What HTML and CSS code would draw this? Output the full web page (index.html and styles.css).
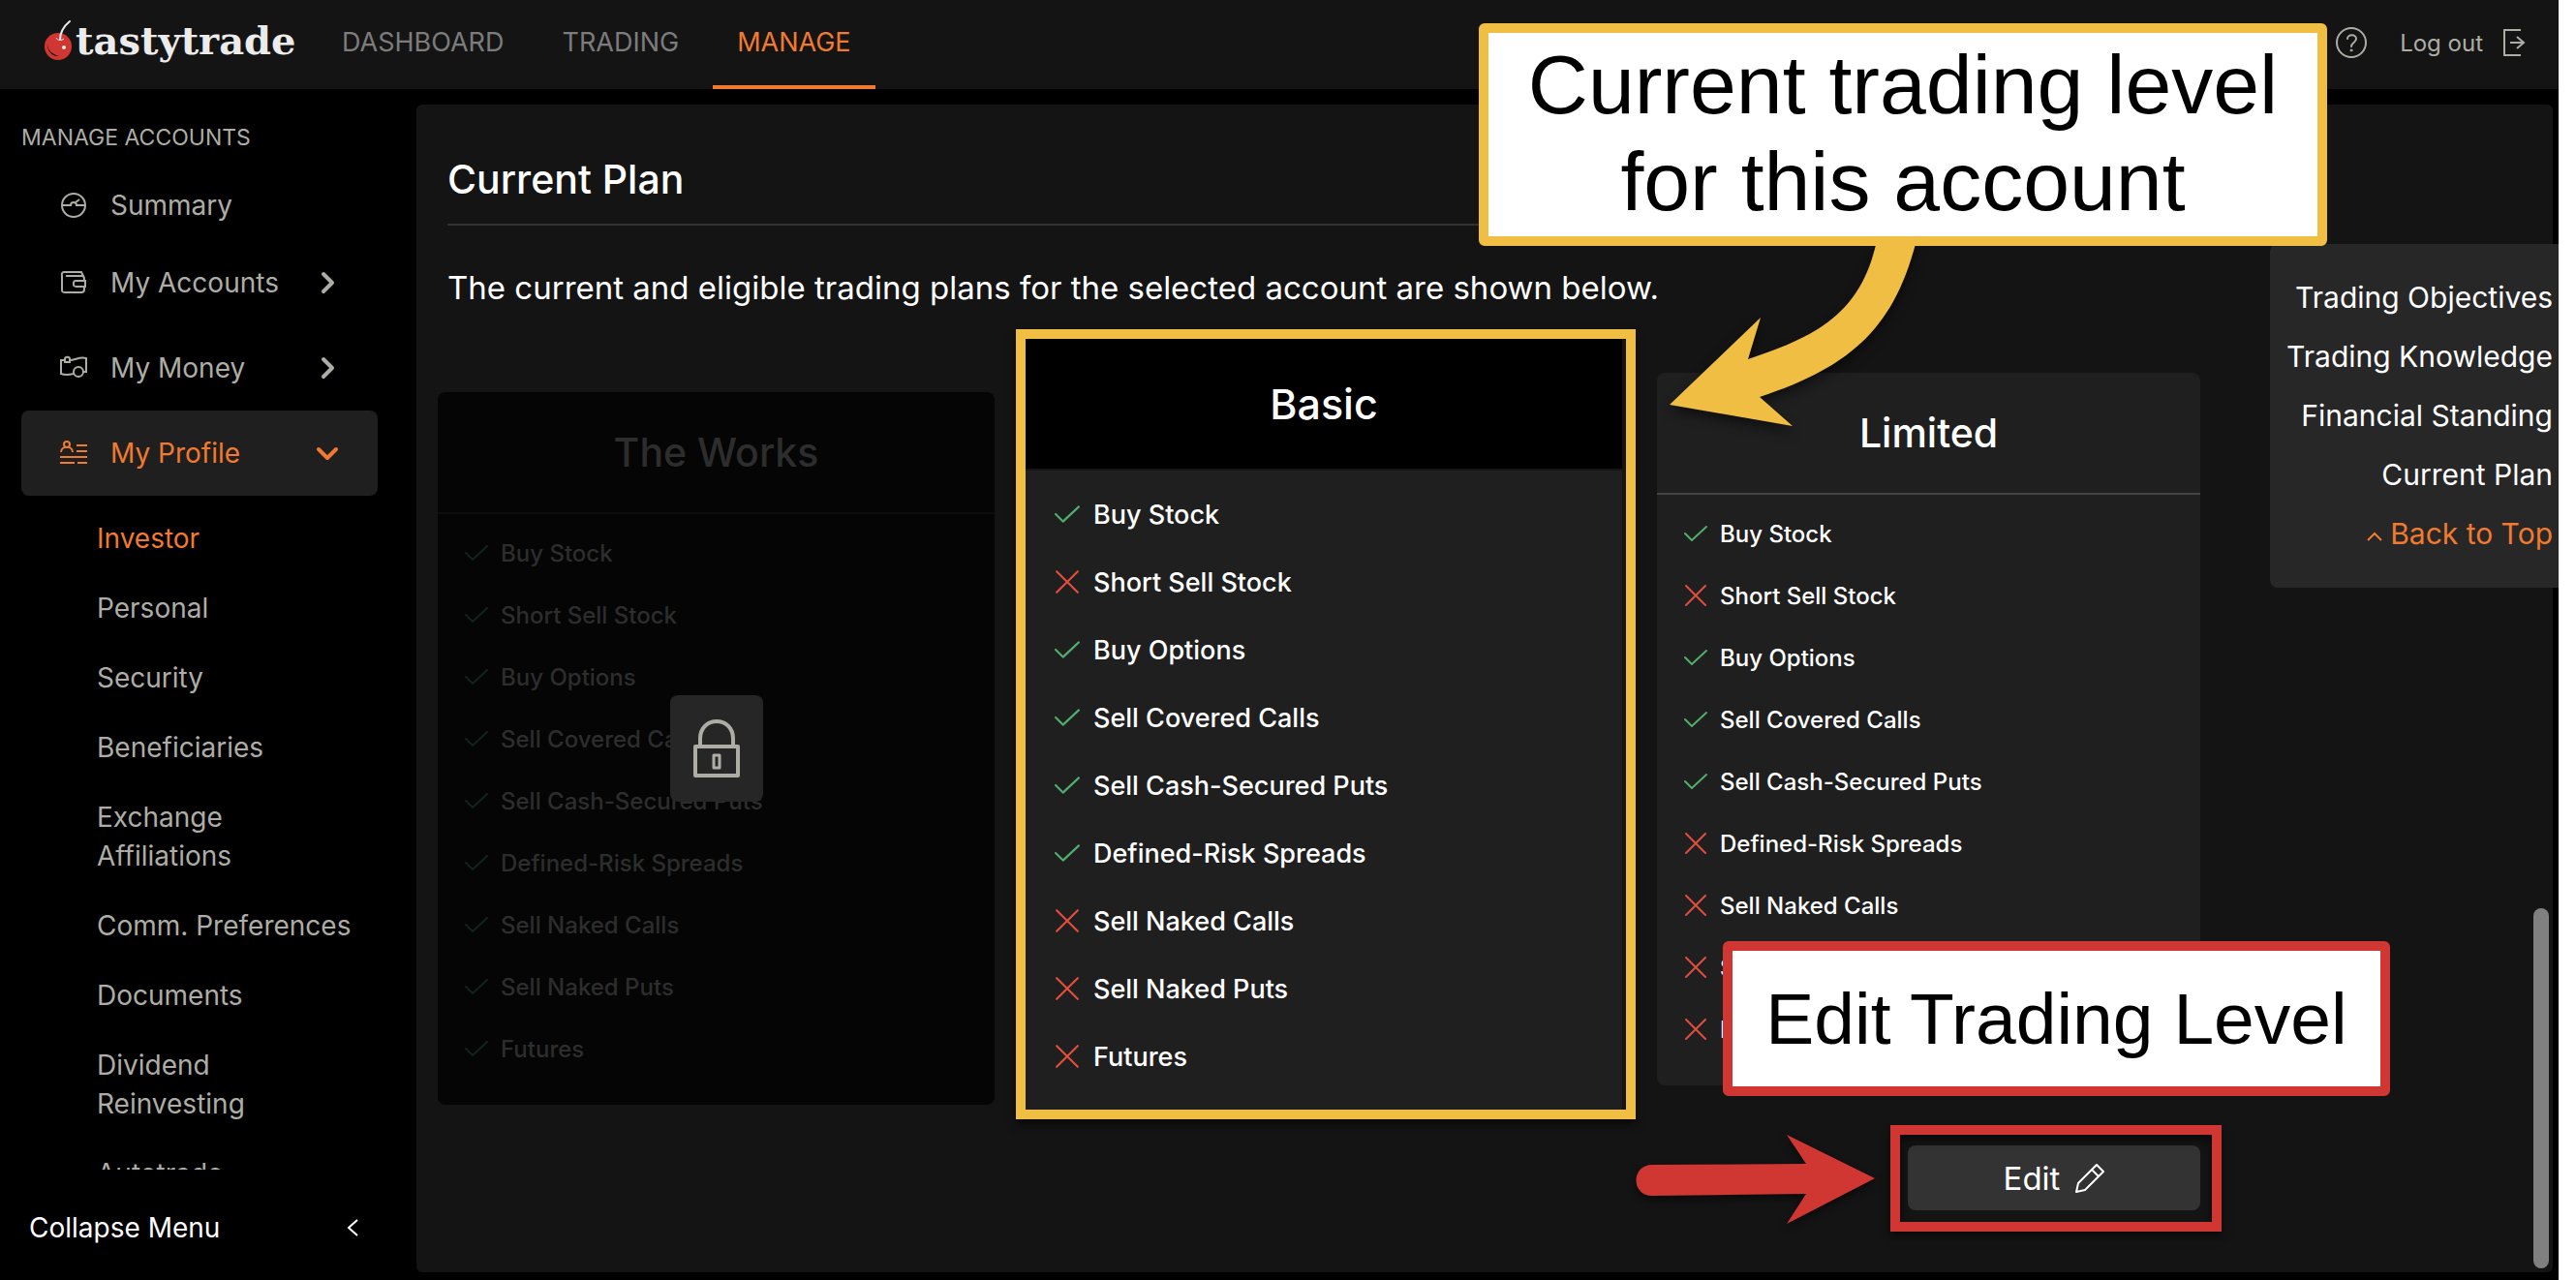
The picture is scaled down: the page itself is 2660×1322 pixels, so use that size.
FILE: index.html
```
<!DOCTYPE html>
<html lang="en">
<head>
  <meta charset="UTF-8" />
  <meta name="viewport" content="width=device-width, initial-scale=1.0"/>
  <title>tastytrade - Current Plan</title>
  <link rel="stylesheet" href="styles.css">
</head>
<body>
  <!-- shared icons -->
  <svg class="sprite" width="0" height="0" aria-hidden="true">
    <symbol id="check" viewBox="0 0 24 24"><path d="M1 12l7 7L23 5" fill="none" stroke="currentColor" stroke-width="2" stroke-linecap="round" stroke-linejoin="round"/></symbol>
    <symbol id="cross" viewBox="0 0 24 24"><path d="M2 2l20 20M22 2L2 22" fill="none" stroke="currentColor" stroke-width="2" stroke-linecap="round"/></symbol>
    <symbol id="chevron" viewBox="0 0 24 24"><path d="M8 3l9 9-9 9" fill="none" stroke="currentColor" stroke-width="4" stroke-linecap="round" stroke-linejoin="round"/></symbol>
  </svg>

  <div class="app">
    <header class="topbar">
      <a href="#" class="logo">
        <svg class="cherry" viewBox="0 0 30 42" aria-hidden="true">
          <circle cx="14" cy="28" r="14" fill="#d03733"/>
          <path d="M26 2C20 7 16 14 16 21" fill="none" stroke="#ebebeb" stroke-width="2" stroke-linecap="round"/>
          <path d="M12 19c1 3 6 3 8 1" fill="none" stroke="#ebebeb" stroke-width="1"/>
          <circle cx="20" cy="29" r="2" fill="#ebebeb"/>
          <path d="M3 25c0 7 5 11 12 13-7 1-13-6-12-13z" fill="#141414"/>
        </svg>
        <span>tastytrade</span>
      </a>
      <nav class="tabs">
        <a href="#">DASHBOARD</a>
        <a href="#">TRADING</a>
        <a href="#" class="active">MANAGE</a>
      </nav>
      <div class="session">
        <a href="#" class="help" aria-label="Help">
          <svg viewBox="0 0 32 32" fill="none" stroke="currentColor" stroke-width="2" stroke-linecap="round">
            <circle cx="16" cy="16" r="15"/>
            <path d="M12 12c0-5 9-5 9 0 0 4-5 4-5 8"/>
            <circle cx="16" cy="24" r="1" fill="currentColor" stroke-width="1"/>
          </svg>
        </a>
        <a href="#" class="logout">Log out
          <svg viewBox="0 0 24 28" fill="none" stroke="currentColor" stroke-width="2">
            <path d="M19 1H2v26h17M8 14h14M15 8l7 6-7 6"/>
          </svg>
        </a>
      </div>
    </header>

    <div class="body">
      <aside class="sidebar">
        <nav class="menu">
          <h2>MANAGE ACCOUNTS</h2>
          <a href="#" class="item short">
            <svg class="icon" viewBox="0 0 28 28"><circle cx="14" cy="14" r="12"/><path d="M2 14h9c0-4 6-4 6 0h9M16 11l4-3"/></svg>
            <span>Summary</span>
          </a>
          <a href="#" class="item">
            <svg class="icon" viewBox="0 0 28 28"><path d="M24 8V7l-2-4H4C1 3 2 6 2 8v13c0 2 0 3 3 3h17c2 0 3-1 3-3v-2M6 7h17c2 0 2 2 2 5M26 12h-9c-3 0-3 1-3 3s0 3 3 3h9z"/></svg>
            <span>My Accounts</span>
            <svg class="arrow"><use href="#chevron"/></svg>
          </a>
          <a href="#" class="item">
            <svg class="icon" viewBox="0 0 28 28"><path d="M5 6H1v14c5 2 9 1 13 0M10 6c6 0 10-4 17-2v14h-3M5 8V5c0-3 5-3 5 0v3H5z"/><circle cx="19" cy="18" r="5"/></svg>
            <span>My Money</span>
            <svg class="arrow"><use href="#chevron"/></svg>
          </a>
          <a href="#" class="item open">
            <svg class="icon" viewBox="0 0 28 28"><circle cx="7" cy="5" r="3"/><path d="M1 13c0-7 12-7 12 0M17 6h11M17 12h11M0 18h28M0 24h15M18 24h10"/></svg>
            <span>My Profile</span>
            <svg class="arrow down"><use href="#chevron"/></svg>
          </a>
          <ul class="submenu">
            <li><a href="#" class="active">Investor</a></li>
            <li><a href="#">Personal</a></li>
            <li><a href="#">Security</a></li>
            <li><a href="#">Beneficiaries</a></li>
            <li><a href="#">Exchange<br>Affiliations</a></li>
            <li><a href="#">Comm. Preferences</a></li>
            <li><a href="#">Documents</a></li>
            <li><a href="#">Dividend<br>Reinvesting</a></li>
            <li><a href="#">Autotrade</a></li>
          </ul>
        </nav>
        <button type="button" class="collapse">
          Collapse Menu
          <svg viewBox="0 0 12 20"><path d="M11 2L2 10l9 8" fill="none" stroke="currentColor" stroke-width="2"/></svg>
        </button>
      </aside>

      <main class="content">
        <section class="plan">
          <h1>Current Plan</h1>
          <p class="intro">The current and eligible trading plans for the selected account are shown below.</p>

          <div class="cards">
            <article class="card locked">
              <h3>The Works</h3>
              <ul>
                <li><svg class="yes"><use href="#check"/></svg>Buy Stock</li>
                <li><svg class="yes"><use href="#check"/></svg>Short Sell Stock</li>
                <li><svg class="yes"><use href="#check"/></svg>Buy Options</li>
                <li><svg class="yes"><use href="#check"/></svg>Sell Covered Calls</li>
                <li><svg class="yes"><use href="#check"/></svg>Sell Cash-Secured Puts</li>
                <li><svg class="yes"><use href="#check"/></svg>Defined-Risk Spreads</li>
                <li><svg class="yes"><use href="#check"/></svg>Sell Naked Calls</li>
                <li><svg class="yes"><use href="#check"/></svg>Sell Naked Puts</li>
                <li><svg class="yes"><use href="#check"/></svg>Futures</li>
              </ul>
              <div class="lock">
                <svg viewBox="0 0 48 60" fill="none" stroke="#adada5" stroke-width="4" stroke-linejoin="round">
                  <path d="M2 28h44v30H2zM7 28V20c0-24 34-24 34 0v8"/>
                  <path d="M21 37h6v13h-6z" stroke-width="3"/>
                </svg>
              </div>
            </article>

            <div class="highlight">
              <article class="card current">
                <h3>Basic</h3>
                <ul>
                  <li><svg class="yes"><use href="#check"/></svg>Buy Stock</li>
                  <li><svg class="no"><use href="#cross"/></svg>Short Sell Stock</li>
                  <li><svg class="yes"><use href="#check"/></svg>Buy Options</li>
                  <li><svg class="yes"><use href="#check"/></svg>Sell Covered Calls</li>
                  <li><svg class="yes"><use href="#check"/></svg>Sell Cash-Secured Puts</li>
                  <li><svg class="yes"><use href="#check"/></svg>Defined-Risk Spreads</li>
                  <li><svg class="no"><use href="#cross"/></svg>Sell Naked Calls</li>
                  <li><svg class="no"><use href="#cross"/></svg>Sell Naked Puts</li>
                  <li><svg class="no"><use href="#cross"/></svg>Futures</li>
                </ul>
              </article>
            </div>

            <article class="card limited">
              <h3>Limited</h3>
              <ul>
                <li><svg class="yes"><use href="#check"/></svg>Buy Stock</li>
                <li><svg class="no"><use href="#cross"/></svg>Short Sell Stock</li>
                <li><svg class="yes"><use href="#check"/></svg>Buy Options</li>
                <li><svg class="yes"><use href="#check"/></svg>Sell Covered Calls</li>
                <li><svg class="yes"><use href="#check"/></svg>Sell Cash-Secured Puts</li>
                <li><svg class="no"><use href="#cross"/></svg>Defined-Risk Spreads</li>
                <li><svg class="no"><use href="#cross"/></svg>Sell Naked Calls</li>
                <li><svg class="no"><use href="#cross"/></svg>Sell Naked Puts</li>
                <li><svg class="no"><use href="#cross"/></svg>Futures</li>
              </ul>
            </article>
          </div>

          <div class="actions">
            <div class="edit-wrap">
              <button type="button" class="edit">Edit
                <svg viewBox="0 0 30 30" fill="none" stroke="currentColor" stroke-width="2" stroke-linejoin="round">
                  <path d="M1 29l2-9L22 1l7 7-19 19zM17 6l7 7"/>
                </svg>
              </button>
            </div>
          </div>
        </section>

        <nav class="toc">
          <a href="#">Trading Objectives</a>
          <a href="#">Trading Knowledge</a>
          <a href="#">Financial Standing</a>
          <a href="#">Current Plan</a>
          <a href="#" class="top"><svg viewBox="0 0 16 10"><path d="M1 9l7-7 7 7" fill="none" stroke="currentColor" stroke-width="2"/></svg>Back to Top</a>
        </nav>
        <div class="scrollbar"></div>
      </main>
    </div>

    <!-- callouts over the page -->
    <svg class="curve" viewBox="1710 240 290 220" aria-hidden="true">
      <path d="M1939 244C1924 318 1885 345 1805 371L1818 328 1724 418 1851 440 1817 410C1915 378 1958 335 1980 244z" fill="#f0be42"/>
    </svg>
    <div class="callout level">Current trading level<br>for this account</div>
    <div class="callout change">Edit Trading Level</div>
    <svg class="pointer" viewBox="1680 1160 270 120" aria-hidden="true">
      <path d="M1706 1203L1865 1202 1845 1172 1936 1217 1845 1264 1865 1233 1706 1235C1684 1235 1684 1203 1706 1203z" fill="#d03733"/>
    </svg>
  </div>
</body>
</html>
```
FILE: styles.css
```
* {
  box-sizing: border-box;
}

body {
  margin: 0;
  background: #fff;
  color: #fff;
  font-family: Inter, sans-serif;
  font-size: 28px;
}

a {
  color: inherit;
  text-decoration: none;
}

ul {
  list-style: none;
  margin: 0;
  padding: 0;
}

button {
  font: inherit;
  color: inherit;
  border: none;
  cursor: pointer;
}

.sprite {
  position: absolute;
}

.app {
  position: relative;
  display: flex;
  flex-direction: column;
  height: 100vh;
  margin-right: 18px;
  background: #000;
  overflow: hidden;
}

/* top bar */
.topbar {
  display: flex;
  flex: none;
  height: 92px;
  padding: 0 34px 0 46px;
  background: #141414;
}

.logo {
  display: flex;
  align-items: center;
  gap: 2px;
  width: 282px;
  padding-bottom: 10px;
  color: #ebebeb;
  font-family: "DejaVu Serif", serif;
  font-size: 40px;
  font-weight: bold;
}

.cherry {
  flex: none;
  width: 30px;
  height: 42px;
}

.tabs {
  display: flex;
  gap: 10px;
  color: #7c7c7c;
  font-size: 27px;
}

.tabs a {
  padding: 0 25px;
  line-height: 88px;
  border-bottom: 4px solid transparent;
}

.tabs .active {
  color: #f07a30;
  border-color: #f07a30;
}

.session {
  display: flex;
  align-items: center;
  gap: 34px;
  margin-left: auto;
  padding-bottom: 4px;
  color: #adada5;
  font-size: 24px;
}

.help svg {
  display: block;
  width: 32px;
  height: 32px;
}

.logout {
  display: flex;
  align-items: center;
  gap: 20px;
}

.logout svg {
  width: 24px;
  height: 28px;
}

.body {
  display: flex;
  flex: 1;
  min-height: 0;
}

/* sidebar */
.sidebar {
  display: flex;
  flex-direction: column;
  flex: none;
  width: 430px;
  padding: 0 40px 0 22px;
  color: #adada5;
}

.menu {
  flex: 1;
  min-height: 0;
  overflow: hidden;
}

.menu h2 {
  margin: 30px 0 20px;
  font-size: 23px;
  font-weight: 400;
  line-height: 40px;
}

.item {
  display: flex;
  align-items: center;
  height: 88px;
  padding: 0 40px;
  border-radius: 8px;
}

.item.short {
  height: 60px;
  margin-bottom: 6px;
}

.icon {
  width: 28px;
  height: 28px;
  margin-right: 24px;
  fill: none;
  stroke: currentColor;
  stroke-width: 2;
}

.arrow {
  width: 24px;
  height: 24px;
  margin-left: auto;
}

.down {
  transform: rotate(90deg);
}

.open {
  background: #1f1f1f;
  color: #f07a30;
}

.submenu {
  padding: 8px 0 0 78px;
}

.submenu a {
  display: block;
  padding: 16px 0;
  line-height: 40px;
  white-space: nowrap;
}

.submenu .active {
  color: #f07a30;
}

.collapse {
  display: flex;
  align-items: center;
  justify-content: space-between;
  height: 114px;
  padding: 6px 20px 0 8px;
  background: none;
  color: #fff;
}

.collapse svg {
  width: 12px;
  height: 20px;
}

/* main panel */
.content {
  position: relative;
  flex: 1;
  margin: 16px 6px 8px 0;
  padding-right: 364px;
  background: #141414;
  border-radius: 6px;
}

.plan h1 {
  margin: 0 0 0 32px;
  padding: 53px 0 22px;
  border-bottom: 2px solid #333;
  font-size: 41px;
  font-weight: 500;
  line-height: 48px;
}

.intro {
  margin: 44px 0 23px 32px;
  font-size: 33px;
  line-height: 40px;
}

.cards {
  display: grid;
  grid-template-columns: 575fr 640fr 561fr;
  align-items: start;
  gap: 22px;
  padding-left: 22px;
}

.card {
  position: relative;
  background: #1f1f1f;
  border-radius: 8px;
  font-size: 24px;
  font-weight: 500;
}

.card h3 {
  margin: 0;
  border-bottom: 2px solid #444;
  font-size: 41px;
  font-weight: 500;
  line-height: 124px;
  text-align: center;
}

.card ul {
  padding: 8px 28px 26px;
}

.card li {
  display: flex;
  align-items: center;
  gap: 13px;
  height: 64px;
}

.card li svg {
  width: 24px;
  height: 24px;
}

.yes {
  color: #4fae6d;
}

.no {
  color: #e24d3c;
}

.locked {
  margin-top: 65px;
  background: #050505;
  color: #2d2d2d;
}

.locked h3 {
  border-color: #0c0c0c;
}

.locked .yes {
  color: #12241a;
}

.lock {
  position: absolute;
  top: 313px;
  left: calc(50% - 48px);
  display: flex;
  align-items: center;
  justify-content: center;
  width: 96px;
  height: 110px;
  background: #262626;
  border-radius: 8px;
}

.lock svg {
  width: 48px;
  height: 60px;
}

.limited {
  margin-top: 45px;
}

.highlight {
  padding-right: 4px;
  border: 10px solid #f0be42;
  box-shadow: 0 6px 8px rgba(0, 0, 0, 0.5);
}

.current {
  border-radius: 0;
  font-size: 27px;
}

.current h3 {
  background: #000;
  border-color: #141414;
  font-size: 43px;
  line-height: 134px;
}

.current ul {
  padding: 10px 30px 20px;
}

.current li {
  gap: 14px;
  height: 70px;
}

.current li svg {
  width: 26px;
  height: 26px;
}

.actions {
  display: flex;
  justify-content: flex-end;
  padding-top: 27px;
}

.edit-wrap {
  position: relative;
}

/* frame around the edit button */
.edit-wrap::after {
  content: "";
  position: absolute;
  inset: -21px -22px -22px -18px;
  border: 10px solid #d03733;
  box-shadow: 0 6px 8px rgba(0, 0, 0, 0.5), inset 0 6px 8px rgba(0, 0, 0, 0.5);
  pointer-events: none;
}

.edit {
  display: flex;
  align-items: center;
  justify-content: center;
  gap: 16px;
  width: 302px;
  height: 67px;
  background: #333;
  border-radius: 8px;
  font-size: 33px;
}

.edit svg {
  width: 30px;
  height: 30px;
}

/* on-page links */
.toc {
  position: absolute;
  top: 144px;
  right: -6px;
  display: flex;
  flex-direction: column;
  align-items: flex-end;
  width: 298px;
  height: 355px;
  padding: 25px 6px 0 0;
  background: #272727;
  border-radius: 8px 0 0 8px;
  font-size: 30px;
  line-height: 61px;
  white-space: nowrap;
}

.top {
  color: #f07a30;
}

.top svg {
  width: 16px;
  height: 10px;
  margin-right: 8px;
  vertical-align: middle;
}

.scrollbar {
  position: absolute;
  right: 4px;
  bottom: 4px;
  width: 16px;
  height: 372px;
  background: #808080;
  border-radius: 8px;
}

/* callouts */
.callout {
  position: absolute;
  display: flex;
  align-items: center;
  justify-content: center;
  border: 10px solid #f0be42;
  border-radius: 6px;
  background: #fff;
  color: #000;
  font-family: "Liberation Sans", Arial, sans-serif;
  text-align: center;
  white-space: nowrap;
}

.level {
  top: 24px;
  left: 1527px;
  width: 876px;
  height: 230px;
  padding-bottom: 4px;
  font-size: 86px;
  line-height: 100px;
}

.change {
  top: 972px;
  left: 1779px;
  width: 689px;
  height: 160px;
  border-color: #d03733;
  font-size: 75px;
}

.curve {
  position: absolute;
  top: 240px;
  left: 1710px;
  width: 290px;
  height: 220px;
  filter: drop-shadow(0 6px 6px rgba(0, 0, 0, 0.5));
}

.pointer {
  position: absolute;
  top: 1160px;
  left: 1680px;
  width: 270px;
  height: 120px;
  filter: drop-shadow(0 4px 4px rgba(0, 0, 0, 0.5));
}
```
